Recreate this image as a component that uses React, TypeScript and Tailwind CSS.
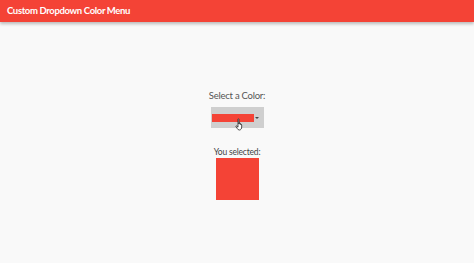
import React from 'react';

const App: React.FC = () => {
  return (
    <div className="min-h-[263px] bg-[#f9f9f9] font-['Lato',sans-serif]">
      {/* Header bar */}
      <div className="h-[22px] bg-[#f44336] px-[7px] flex items-center shadow-[0_2px_3px_rgba(0,0,0,0.25)]">
        <span className="text-white text-[9.5px] font-bold tracking-[-0.35px]">Custom Dropdown Color Menu</span>
      </div>

      <div className="flex flex-col items-center pt-[67px]">
        <p className="text-[9.5px] leading-[14px] tracking-[-0.25px] text-[#555]">Select a Color:</p>

        {/* Dropdown */}
        <div className="relative mt-[4px] w-[53px] h-[21px] bg-[#cfcfcf] flex items-center pl-[1px] pr-[3px]">
          <div className="w-[42px] h-[8px] bg-[#f44336]" />
          <div className="flex-1 flex justify-center">
            <div className="w-0 h-0 border-l-[2px] border-r-[2px] border-t-[2px] border-l-transparent border-r-transparent border-t-[#444]" />
          </div>
          {/* pointer cursor */}
          <svg className="absolute left-[24px] top-[11px]" width="11" height="13" viewBox="0 0 11 13">
            <path
              d="M3 1.2c0-.6.9-.6.9 0V6l.1-1c0-.6.9-.6.9 0v1.2c0-.6.9-.6.9 0v.8c0-.6.9-.6.9 0V9c0 1.5-.8 3-2.3 3H4.3C3.4 12 2.8 11.4 2.3 10.6L1 8.6c-.3-.5.3-1 .7-.6L3 9.2z"
              fill="#fff"
              stroke="#222"
              strokeWidth="0.8"
              strokeLinejoin="round"
            />
          </svg>
        </div>

        <p className="mt-[18px] text-[8.5px] leading-[12px] tracking-[-0.2px] text-[#444]">You selected:</p>
        <div className="w-[43px] h-[42px] bg-[#f44336]" />
      </div>
    </div>
  );
};

export default App;
